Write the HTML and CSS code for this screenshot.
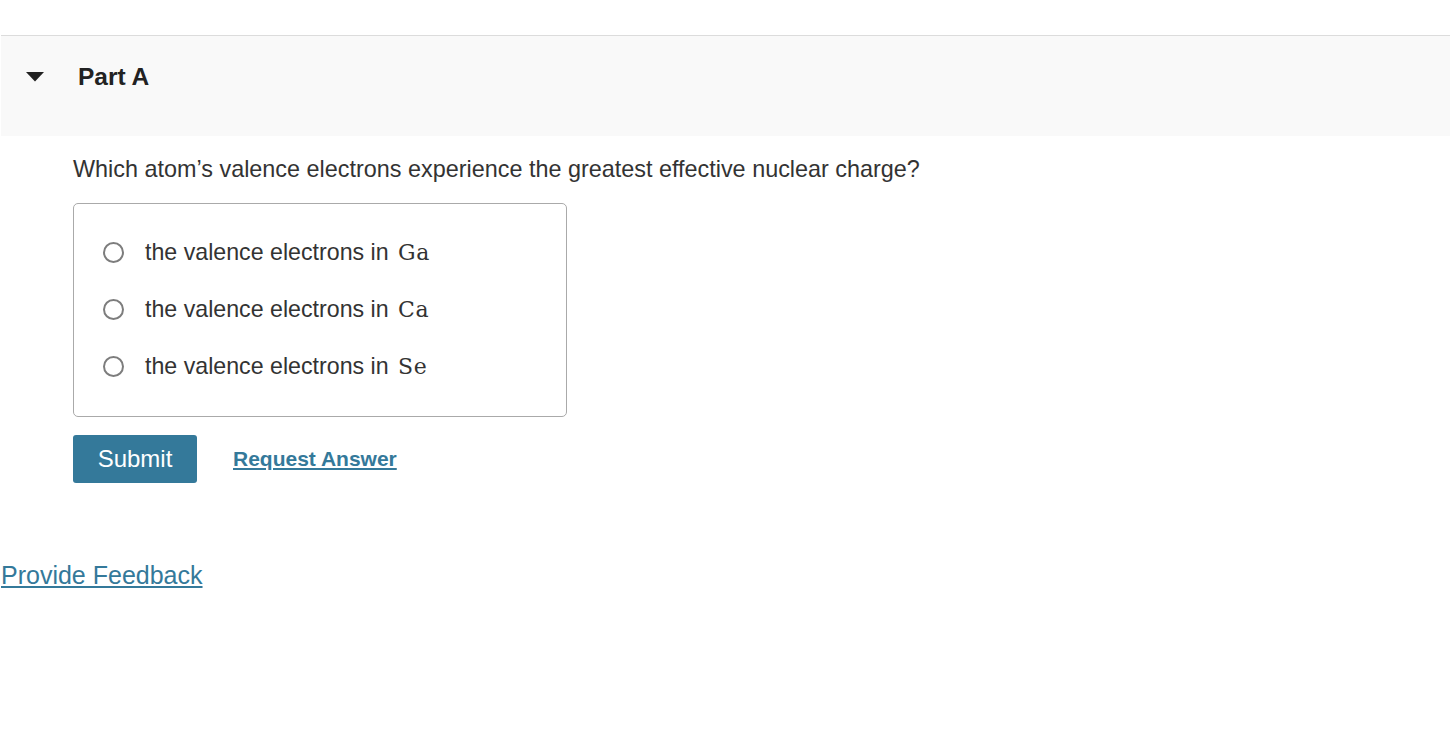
FILE: index.html
```html
<!DOCTYPE html>
<html lang="en">
<head>
  <meta charset="UTF-8">
  <title>Part A</title>
  <link rel="stylesheet" href="styles.css">
</head>
<body>

<div class="page">
  <div class="part-header">
    <svg class="caret" width="18" height="10" viewBox="0 0 18 10"><polygon points="0,0 18,0 9,9.5" fill="#222"/></svg>
    <h2>Part A</h2>
  </div>

  <div class="part-body">
    <p class="question">Which atom’s valence electrons experience the greatest effective nuclear charge?</p>

    <div class="choices">
      <label class="choice"><span class="radio"></span><span>the valence electrons in <span class="el">Ga</span></span></label>
      <label class="choice"><span class="radio"></span><span>the valence electrons in <span class="el">Ca</span></span></label>
      <label class="choice"><span class="radio"></span><span>the valence electrons in <span class="el">Se</span></span></label>
    </div>

    <div class="actions">
      <button class="submit">Submit</button>
      <a href="#" class="request">Request Answer</a>
    </div>
  </div>

  <a href="#" class="feedback">Provide Feedback</a>
</div>

</body>
</html>
```

FILE: styles.css
```css
body {
  margin: 0;
  font-family: "Liberation Sans", Arial, sans-serif;
  color: #333;
  background: #fff;
}

.page {
  padding-top: 35px;
}

.part-header {
  margin-left: 1px;
  height: 101px;
  border-top: 1px solid #dcdcdc;
  background: #f9f9f9;
  display: flex;
  align-items: center;
  padding-left: 25px;
  padding-bottom: 18px;
  box-sizing: border-box;
}

.part-header h2 {
  margin: 0 0 0 34px;
  font-size: 24.5px;
  font-weight: bold;
  color: #222;
}

.part-body {
  padding-left: 73px;
}

.question {
  margin: 19px 0 0;
  font-size: 23.4px;
  line-height: 29px;
}

.choices {
  margin-top: 19px;
  width: 494px;
  border: 1px solid #aaa;
  border-radius: 5px;
  padding: 20px 0 21px 29px;
  box-sizing: border-box;
}

.choice {
  display: flex;
  align-items: center;
  height: 57px;
  font-size: 23.2px;
}

.radio {
  width: 17px;
  height: 17px;
  border: 2px solid #7d7d7d;
  border-radius: 50%;
  margin-right: 21px;
  flex-shrink: 0;
}

.el {
  margin-left: 3px;
  font-family: "DejaVu Serif", "Liberation Serif", serif;
  font-size: 22px;
  letter-spacing: 0.5px;
}

.actions {
  margin-top: 18px;
  display: flex;
  align-items: center;
}

.submit {
  width: 124px;
  height: 48px;
  border: none;
  border-radius: 3px;
  background: #34799a;
  color: #fff;
  font-family: "Liberation Sans", Arial, sans-serif;
  font-size: 24px;
}

.request {
  margin-left: 36px;
  font-size: 21px;
  font-weight: bold;
  color: #34799a;
}

.feedback {
  display: inline-block;
  margin: 77px 0 0 1px;
  font-size: 25px;
  line-height: 30px;
  color: #34799a;
}
```
